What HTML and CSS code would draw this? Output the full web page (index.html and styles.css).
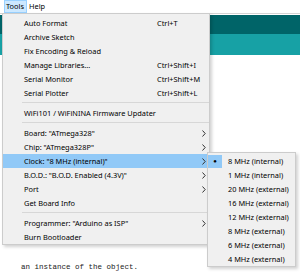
FILE: index.html
```html
<!DOCTYPE html>
<html>
<head>
<meta charset="utf-8">
<link rel="stylesheet" href="styles.css">
</head>
<body>
<div class="screen">
  <div class="menubar">
    <span class="mb-item active">Tools</span>
    <span class="mb-item">Help</span>
  </div>
  <div class="gap"></div>
  <div class="toolbar"></div>
  <div class="tabbar"></div>
  <div class="editor">
    <div class="code">an instance of the object.</div>
  </div>

  <div class="menu tools">
    <div class="item"><span class="label">Auto Format</span><span class="key">Ctrl+T</span></div>
    <div class="item"><span class="label">Archive Sketch</span></div>
    <div class="item"><span class="label">Fix Encoding &amp; Reload</span></div>
    <div class="item"><span class="label">Manage Libraries...</span><span class="key">Ctrl+Shift+I</span></div>
    <div class="item"><span class="label">Serial Monitor</span><span class="key">Ctrl+Shift+M</span></div>
    <div class="item"><span class="label">Serial Plotter</span><span class="key">Ctrl+Shift+L</span></div>
    <div class="sep"></div>
    <div class="item"><span class="label">WiFi101 / WiFiNINA Firmware Updater</span></div>
    <div class="sep"></div>
    <div class="item"><span class="label">Board: "ATmega328"</span><span class="key"></span><svg class="arrow" viewBox="0 0 4 7" width="4" height="7"><path d="M0.5 0.5 L3.2 3.5 L0.5 6.5" fill="none" stroke="#333" stroke-width="1"/></svg></div>
    <div class="item"><span class="label">Chip: "ATmega328P"</span><span class="key"></span><svg class="arrow" viewBox="0 0 4 7" width="4" height="7"><path d="M0.5 0.5 L3.2 3.5 L0.5 6.5" fill="none" stroke="#333" stroke-width="1"/></svg></div>
    <div class="item hl"><span class="label">Clock: "8 MHz (internal)"</span><span class="key"></span><svg class="arrow" viewBox="0 0 4 7" width="4" height="7"><path d="M0.5 0.5 L3.2 3.5 L0.5 6.5" fill="none" stroke="#333" stroke-width="1"/></svg></div>
    <div class="item"><span class="label">B.O.D.: "B.O.D. Enabled (4.3V)"</span><span class="key"></span><svg class="arrow" viewBox="0 0 4 7" width="4" height="7"><path d="M0.5 0.5 L3.2 3.5 L0.5 6.5" fill="none" stroke="#333" stroke-width="1"/></svg></div>
    <div class="item"><span class="label">Port</span><span class="key"></span><svg class="arrow" viewBox="0 0 4 7" width="4" height="7"><path d="M0.5 0.5 L3.2 3.5 L0.5 6.5" fill="none" stroke="#333" stroke-width="1"/></svg></div>
    <div class="item"><span class="label">Get Board Info</span></div>
    <div class="sep"></div>
    <div class="item"><span class="label">Programmer: "Arduino as ISP"</span><span class="key"></span><svg class="arrow" viewBox="0 0 4 7" width="4" height="7"><path d="M0.5 0.5 L3.2 3.5 L0.5 6.5" fill="none" stroke="#333" stroke-width="1"/></svg></div>
    <div class="item"><span class="label">Burn Bootloader</span></div>
  </div>

  <div class="menu sub">
    <div class="sitem"><span class="check">&#9679;</span><span>8 MHz (internal)</span></div>
    <div class="sitem"><span class="nocheck"></span><span>1 MHz (internal)</span></div>
    <div class="sitem"><span class="nocheck"></span><span>20 MHz (external)</span></div>
    <div class="sitem"><span class="nocheck"></span><span>16 MHz (external)</span></div>
    <div class="sitem"><span class="nocheck"></span><span>12 MHz (external)</span></div>
    <div class="sitem"><span class="nocheck"></span><span>8 MHz (external)</span></div>
    <div class="sitem"><span class="nocheck"></span><span>6 MHz (external)</span></div>
    <div class="sitem"><span class="nocheck"></span><span>4 MHz (external)</span></div>
  </div>
</div>
</body>
</html>
```

FILE: styles.css
```css
* { box-sizing: border-box; }
html, body { margin: 0; padding: 0; }
body {
  width: 300px;
  height: 274px;
  overflow: hidden;
  background: #fff;
  font-family: "Noto Sans", "Segoe UI", sans-serif;
  font-size: 7.4px;
  color: #000;
}
.screen {
  position: relative;
  width: 300px;
  height: 274px;
  display: flex;
  flex-direction: column;
}
.menubar {
  height: 14px;
  border-bottom: 1px solid #d4d4d4;
  display: flex;
  align-items: stretch;
  padding-left: 4px;
  background: #fff;
}
.mb-item {
  display: flex;
  align-items: center;
  padding: 0 2px 1px 1px;
  height: 13px;
  border: 1px solid transparent;
}
.mb-item.active {
  background: #cce8ff;
  border-color: #99d1ff;
}
.gap { height: 1px; }
.toolbar { height: 19px; background: #006468; }
.tabbar { height: 21px; background: #17a1a5; }
.editor {
  flex: 1;
  display: flex;
  flex-direction: column;
  justify-content: flex-end;
  padding: 0 0 2px 21px;
}
.code {
  font-family: "Liberation Mono", monospace;
  font-size: 7.5px;
  line-height: 10px;
  color: #222;
}
.menu {
  position: absolute;
  background: #f0f0f0;
  border: 1px solid #cccccc;
  box-shadow: 2px 2px 3px rgba(0,0,0,0.18);
}
.tools {
  left: 2px;
  top: 13px;
  width: 208px;
  padding: 2px 0 0 0;
}
.item {
  height: 14px;
  display: grid;
  grid-template-columns: 133px 1fr 6px;
  align-items: center;
  padding-left: 21px;
  margin: 0 1px 0 0;
  white-space: nowrap;
}
.item.hl { background: #91c9f7; }
.arrow { grid-column: 3; display: block; }
.sep {
  height: 6px;
  margin-left: 19px;
  position: relative;
}
.sep::after {
  content: "";
  position: absolute;
  left: 0; right: 0; top: 2px;
  height: 1px;
  background: #d7d7d7;
}
.sub {
  left: 207px;
  top: 152px;
  width: 89px;
  padding: 1px 0 0 0;
}
.sitem {
  height: 14px;
  display: flex;
  align-items: center;
  white-space: nowrap;
}
.check, .nocheck {
  width: 14px;
  height: 13px;
  margin: 0 6px 0 0;
  display: flex;
  align-items: center;
  justify-content: center;
  font-size: 6px;
}
.check { background: #91c9f7; }
```
